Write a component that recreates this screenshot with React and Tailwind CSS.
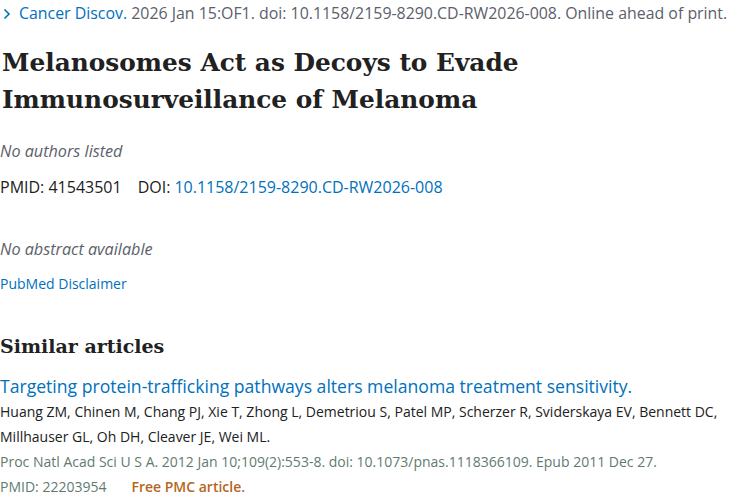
export default function App() {
  const sans = { fontFamily: '"Open Sans", "Noto Sans", sans-serif' };
  const serif = { fontFamily: '"DejaVu Serif", serif' };
  return (
    <div className="w-[750px] h-[500px] overflow-hidden bg-white text-[#212121]" style={sans}>
      {/* citation line */}
      <div className="flex items-center h-[27px] text-[15.9px] text-[#5b616b] whitespace-nowrap">
        <svg width="8" height="12" viewBox="0 0 8 12" className="ml-[3px] mr-[8px] shrink-0">
          <path d="M1.5 1.5 L6 6 L1.5 10.5" fill="none" stroke="#0071bc" strokeWidth="1.6" />
        </svg>
        <span className="text-[#0071bc]">Cancer Discov.</span>
        <span>&nbsp;2026 Jan 15:OF1. doi: 10.1158/2159-8290.CD-RW2026-008. Online ahead of print.</span>
      </div>

      {/* title */}
      <h1 className="mt-[17px] ml-[2px] text-[24.8px] leading-[37px] font-bold text-[#212121]" style={serif}>
        Melanosomes Act as Decoys to Evade
        <br />
        Immunosurveillance of Melanoma
      </h1>

      <div className="mt-[22px] text-[16.2px] italic text-[#5b616b] leading-[22px]">No authors listed</div>

      <div className="mt-[14px] text-[16px] leading-[22px] flex">
        <span>PMID: 41543501</span>
        <span className="ml-[16px]">DOI: </span>
        <span className="ml-[4px] text-[#0071bc]">10.1158/2159-8290.CD-RW2026-008</span>
      </div>

      <div className="mt-[40px] text-[16.2px] italic text-[#5b616b] leading-[22px]">No abstract available</div>

      <div className="mt-[14px] text-[14px] text-[#0071bc] leading-[20px]">PubMed Disclaimer</div>

      <h2 className="mt-[37px] text-[19px] leading-[30px] font-bold" style={serif}>Similar articles</h2>

      <div className="mt-[13px] text-[17.6px] leading-[24px] text-[#0071bc] whitespace-nowrap">
        Targeting protein-trafficking pathways alters melanoma treatment sensitivity.
      </div>
      <div className="mt-[1px] text-[14px] leading-[25px] text-[#212121] whitespace-nowrap">
        Huang ZM, Chinen M, Chang PJ, Xie T, Zhong L, Demetriou S, Patel MP, Scherzer R, Sviderskaya EV, Bennett DC,
        <br />
        Millhauser GL, Oh DH, Cleaver JE, Wei ML.
      </div>
      <div className="text-[14px] leading-[25px] text-[#5f7b6f] whitespace-nowrap">
        Proc Natl Acad Sci U S A. 2012 Jan 10;109(2):553-8. doi: 10.1073/pnas.1118366109. Epub 2011 Dec 27.
      </div>
      <div className="text-[14px] leading-[25px] text-[#5f7b6f] flex">
        <span>PMID: 22203954</span>
        <span className="ml-[25px] font-semibold text-[#b5651d]">Free PMC article.</span>
      </div>
    </div>
  );
}
